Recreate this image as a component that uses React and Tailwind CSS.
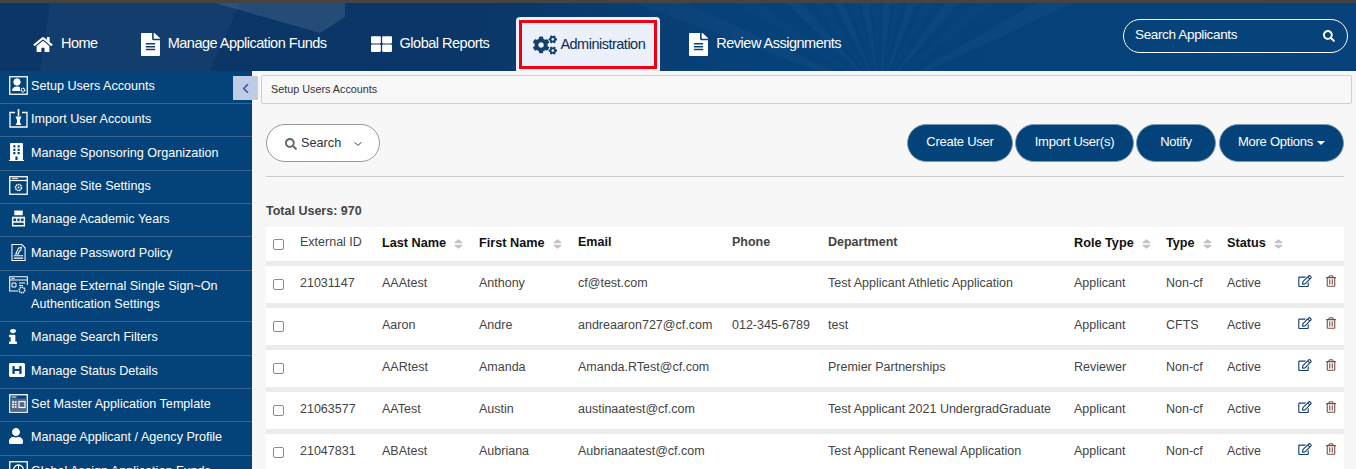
import { FaHome, FaFileAlt, FaThLarge, FaCogs, FaSearch, FaRegEdit, FaRegTrashAlt, FaInfo, FaUser, FaHSquare, FaBuilding, FaChevronLeft, FaSort } from "react-icons/fa";
import { FiChevronDown } from "react-icons/fi";

const font = "font-['Liberation_Sans',Arial,sans-serif]";

// small framed icons used in the sidebar
function Frame({ children }) {
  return (
    <svg width="19" height="19" viewBox="0 0 19 19" fill="none" stroke="white">
      <rect x="0.75" y="0.75" width="17.5" height="17.5" fill="#03437a" strokeWidth="1.3" />
      {children}
    </svg>
  );
}

const UserGear = () => (
  <Frame>
    <circle cx="8" cy="6" r="3.2" fill="white" />
    <path d="M3 15c0-3 2-4.5 5-4.5 1.5 0 2.5.3 3 .9V15z" fill="white" stroke="none" />
    <circle cx="14" cy="14" r="1.7" strokeWidth="1.4" strokeDasharray="1.3 0.5" />
  </Frame>
);
const ImportIcon = () => (
  <svg width="19" height="19" viewBox="0 0 19 19" fill="none" stroke="white">
    <path d="M6 3.5H1v14.5h17V3.5h-5" strokeWidth="1.3" />
    <path d="M9.5 0v7" strokeWidth="1.6" />
    <path d="M6.5 7.5h6L11 11v2.5l1.5 2.5h-6L8 13.5V11z" fill="white" stroke="none" />
  </svg>
);
const SiteIcon = () => (
  <Frame>
    <path d="M1 4.5h17" strokeWidth="1.2" />
    <path d="M3 2.6h6" strokeWidth="0.9" />
    <circle cx="9.5" cy="11.5" r="3" strokeWidth="1.5" strokeDasharray="1.6 0.6" />
    <circle cx="9.5" cy="11.5" r="1" fill="white" stroke="none" />
  </Frame>
);
const YearsIcon = () => (
  <svg className="ml-[2px]" width="15" height="19" viewBox="0 0 16 19" fill="white">
    <path d="M3.5 1h9v5h-9z" />
    <path d="M1 7.5h14V18H1zM2.5 9.5v3h3v-3zM6.8 9.5v3h2.4v-3zM10.5 9.5v3h3v-3zM2.5 14v2.5h11V14z" fillRule="evenodd" />
  </svg>
);
const PolicyIcon = () => (
  <svg className="ml-[2px]" width="15" height="19" viewBox="0 0 16 19" fill="none" stroke="white" strokeWidth="1.1">
    <path d="M1 1h10.5L15 4.5V18H1z" />
    <path d="M5 11l3-6 3-1-.5 3-2 1.5L8 11zM3 13h10M3 15.5h10" />
  </svg>
);
const SsoIcon = () => (
  <svg width="19" height="19" viewBox="0 0 19 19" fill="none" stroke="white">
    <path d="M9 15H.7V.7h17.6V9" strokeWidth="1.1" />
    <path d="M1 4h17M2.5 2.4h3M10 7h6M10 9.5h4M3 7h4v4H3z" strokeWidth="1" />
    <circle cx="13" cy="14" r="2.8" strokeWidth="1.5" strokeDasharray="1.5 0.6" />
  </svg>
);
const TemplateIcon = () => (
  <Frame>
    <rect x="1.4" y="4.5" width="16.2" height="13" fill="#51678c" stroke="none" />
    <path d="M2.5 3h5" strokeWidth="1" />
    <path d="M3 8h5M3 10.5h5M3 13h5" strokeWidth="1.5" strokeDasharray="2 0.6" />
    <rect x="10" y="7.5" width="6" height="6" strokeWidth="1.2" />
  </Frame>
);
const GlobeIcon = () => (
  <Frame>
    <circle cx="9.5" cy="9" r="5" strokeWidth="1.3" />
    <path d="M4.5 9h10M9.5 4v10" strokeWidth="1" />
  </Frame>
);

const menu = [
  { icon: <UserGear />, label: "Setup Users Accounts", h: "h-[33px]", t: "pt-[6px]" },
  { icon: <ImportIcon />, label: "Import User Accounts", h: "h-[33px]", t: "pt-[6px]" },
  { icon: <FaBuilding className="w-[15px] h-[18px] text-white" preserveAspectRatio="none" />, label: "Manage Sponsoring Organization", h: "h-[34px]", t: "pt-[7px]" },
  { icon: <SiteIcon />, label: "Manage Site Settings", h: "h-[33px]", t: "pt-[6px]" },
  { icon: <YearsIcon />, label: "Manage Academic Years", h: "h-[33px]", t: "pt-[6px]" },
  { icon: <PolicyIcon />, label: "Manage Password Policy", h: "h-[34px]", t: "pt-[7px]" },
  { icon: <SsoIcon />, label: "Manage External Single Sign~On Authentication Settings", h: "h-[51px]", t: "pt-[6px]" },
  { icon: <FaInfo className="w-[8px] h-[15px] mt-[2px] text-white" preserveAspectRatio="none" />, label: "Manage Search Filters", h: "h-[34px]", t: "pt-[6px]" },
  { icon: <FaHSquare className="w-[16px] h-[16px] mt-[1px] text-white" preserveAspectRatio="none" />, label: "Manage Status Details", h: "h-[33px]", t: "pt-[6px]" },
  { icon: <TemplateIcon />, label: "Set Master Application Template", h: "h-[33px]", t: "pt-[6px]" },
  { icon: <FaUser className="w-[14px] h-[16px] mt-[1px] text-white" preserveAspectRatio="none" />, label: "Manage Applicant / Agency Profile", h: "h-[34px]", t: "pt-[6px]" },
  { icon: <GlobeIcon />, label: "Global Assign Application Funds", h: "h-[33px]", t: "pt-[6px]" },
];

const users = [
  ["21031147", "AAAtest", "Anthony", "cf@test.com", "", "Test Applicant Athletic Application", "Applicant", "Non-cf", "Active"],
  ["", "Aaron", "Andre", "andreaaron727@cf.com", "012-345-6789", "test", "Applicant", "CFTS", "Active"],
  ["", "AARtest", "Amanda", "Amanda.RTest@cf.com", "", "Premier Partnerships", "Reviewer", "Non-cf", "Active"],
  ["21063577", "AATest", "Austin", "austinaatest@cf.com", "", "Test Applicant 2021 UndergradGraduate", "Applicant", "Non-cf", "Active"],
  ["21047831", "ABAtest", "Aubriana", "Aubrianaatest@cf.com", "", "Test Applicant Renewal Application", "Applicant", "Non-cf", "Active"],
];

const cols = "grid grid-cols-[34px_82px_97px_99px_154px_96px_246px_92px_61px_70px_1fr] items-center";
const box = "ml-[7px] w-[11px] h-[11px] appearance-none bg-white border border-[#8a8a8a] rounded-[2px]";

// fan of faint rays behind the right part of the header
const rays = [-70, -58, -46, -36, -27, -19, -12, -5, 2, 9, 17, 26, 36, 47, 60];

function SortHead({ children }) {
  return (
    <div className="-mt-[2px] flex items-center gap-[8px] text-[12.7px] font-bold text-[#111]">
      {children}
      <FaSort className="w-[9px] h-[12px] mt-[1px] text-[#c4c4c4]" preserveAspectRatio="none" />
    </div>
  );
}

function NavItem({ icon, children }) {
  return (
    <div className="flex items-center gap-[8px] text-[14.5px] tracking-[-0.5px] text-white">
      {icon}
      <span>{children}</span>
    </div>
  );
}

function PillButton({ children, w }) {
  return (
    <button className={`h-[38px] pb-[2px] rounded-full bg-[#03437a] border border-[#7f9ab5] text-white text-[13px] tracking-[-0.25px] ${w}`}>
      {children}
    </button>
  );
}

export default function App() {
  return (
    <div className={`${font} w-[1356px] h-[469px] overflow-hidden bg-[#f7f7f7]`}>
      <div className="h-[3px] bg-[#444444]" />

      {/* Header */}
      <header className="relative h-[68px] bg-[linear-gradient(90deg,#0b3667_0%,#0a3767_35%,#06427a_55%,#07437a_100%)] overflow-hidden">
        <svg className="absolute inset-0" width="1356" height="68" viewBox="0 0 1356 68">
          <polygon points="50,0 240,0 210,68 40,68" fill="#ffffff" fillOpacity="0.035" />
          <polygon points="215,0 345,0 345,14 320,30" fill="#ffffff" fillOpacity="0.11" />
          {rays.map((a, i) => {
            const t = (d) => 880 + Math.tan((d * Math.PI) / 180) * 110;
            return (
              <polygon
                key={a}
                points={`${t(a)},-20 ${t(a + 5)},-20 880,90`}
                fill="#ffffff"
                fillOpacity={i % 2 ? 0.012 : 0.022}
              />
            );
          })}
        </svg>
        <div className="relative flex items-center h-full pl-[33px] pt-[14px]">
          <NavItem icon={<FaHome className="w-[20px] h-[17px] text-white" />}>Home</NavItem>
          <div className="ml-[43px]">
            <NavItem icon={<FaFileAlt className="w-[19px] h-[23px] text-white" preserveAspectRatio="none" />}>Manage Application Funds</NavItem>
          </div>
          <div className="ml-[44px]">
            <NavItem icon={<FaThLarge className="w-[21px] h-[18px] text-white" preserveAspectRatio="none" />}>Global Reports</NavItem>
          </div>
          <div className="ml-[27px] h-[54px] w-[144px] self-end bg-[#ebf0fb] rounded-t-[4px] p-[3px] pb-[2px]">
            <div className="h-full border-[3px] border-[#f00010] flex items-center justify-center gap-[3px] pl-[2px] text-[14.5px] tracking-[-0.5px] text-[#0a2a52]">
              <FaCogs className="w-[24px] h-[20px] text-[#14406f]" />
              <span>Administration</span>
            </div>
          </div>
          <div className="ml-[29px]">
            <NavItem icon={<FaFileAlt className="w-[19px] h-[23px] text-white" preserveAspectRatio="none" />}>Review Assignments</NavItem>
          </div>
          <div className="ml-auto mr-[8px] mb-[17px] w-[225px] h-[34px] rounded-full border border-white flex items-center justify-between pl-[11px] pr-[12px] text-white text-[13.5px] tracking-[-0.35px]">
            <span className="-mt-[1px]">Search Applicants</span>
            <FaSearch className="w-[12px] h-[12px]" />
          </div>
        </div>
      </header>

      <div className="flex">
        {/* Sidebar */}
        <aside className="relative w-[252px] shrink-0 bg-[#03437a]">
          {menu.map((m) => (
            <div key={m.label} className={`${m.h} ${m.t} flex items-start border-b border-[#37658f] pl-[9px] text-white text-[12.6px] leading-[18px]`}>
              <div className="w-[22px] h-[19px] -mt-[1px] shrink-0 flex justify-start items-start">{m.icon}</div>
              <span>{m.label}</span>
            </div>
          ))}
          <div className="absolute top-[5px] left-[233px] w-[25px] h-[24px] bg-[#c0cce6] flex items-center justify-center">
            <FaChevronLeft className="w-[9px] h-[11px] text-[#4a5ba8]" />
          </div>
        </aside>

        {/* Main */}
        <main className="flex-1 pl-[9px] pr-[4px] pt-[4px] text-[#444]">
          <div className="h-[29px] border border-[#cfcfcf] rounded-[2px] bg-[#f8f8f8] flex items-center pl-[9px] text-[10.8px] text-[#333]">
            Setup Users Accounts
          </div>

          <div className="ml-[5px] mr-[8px]">
            <div className="flex justify-between pt-[20px] pb-[14px] border-b border-[#cccccc]">
              <button className="w-[114px] h-[38px] pt-[1px] rounded-full border border-[#999] bg-white flex items-center pl-[18px] text-[12.7px] text-[#333]">
                <FaSearch className="w-[12px] h-[12px] text-[#666] mr-[4px]" />
                Search
                <FiChevronDown className="w-[12px] h-[12px] ml-[11px] text-[#333]" />
              </button>
              <div className="flex gap-[2px]">
                <PillButton w="w-[106px]">Create User</PillButton>
                <PillButton w="w-[119px]">Import User(s)</PillButton>
                <PillButton w="w-[80px] mr-[1px]">Notify</PillButton>
                <button className="w-[125px] h-[38px] pb-[2px] rounded-full bg-[#03437a] border border-[#7f9ab5] text-white text-[13px] tracking-[-0.25px] flex items-center justify-center gap-[4px]">
                  More Options
                  <span className="w-0 h-0 mt-[2px] border-x-[4px] border-x-transparent border-t-[4px] border-t-white" />
                </button>
              </div>
            </div>

            <div className="mt-[27px] mb-[9px] text-[12.5px] font-bold leading-[14px] text-[#444]">Total Users: 970</div>

            {/* Table */}
            <div className="flex flex-col gap-[5px] bg-[#ececec] text-[12.5px]">
              <div className={`${cols} h-[34px] bg-white leading-[16px]`}>
                <input type="checkbox" className={`${box} mt-[1px]`} />
                <div className="-mt-[4px] text-[#444]">External ID</div>
                <SortHead>Last Name</SortHead>
                <SortHead>First Name</SortHead>
                <div className="-mt-[4px] font-bold text-[#111]">Email</div>
                <div className="-mt-[4px] font-bold text-[#444]">Phone</div>
                <div className="-mt-[4px] font-bold text-[#444]">Department</div>
                <SortHead>Role Type</SortHead>
                <SortHead>Type</SortHead>
                <SortHead>Status</SortHead>
                <div />
              </div>

              {users.map((u) => (
                <div key={u[3]} className={`${cols} h-[37px] bg-white text-[#444]`}>
                  <input type="checkbox" className={`${box} -mt-[1px]`} />
                  {u.map((c, i) => <div key={i} className="-mt-[2px] whitespace-nowrap">{c}</div>)}
                  <div className="flex items-center gap-[14px] pl-[1px] -mt-[7px]">
                    <FaRegEdit className="w-[14px] h-[12px] text-[#14406f]" />
                    <FaRegTrashAlt className="w-[10px] h-[12px] text-[#7a4b3c]" />
                  </div>
                </div>
              ))}
            </div>
          </div>
        </main>
      </div>
    </div>
  );
}
